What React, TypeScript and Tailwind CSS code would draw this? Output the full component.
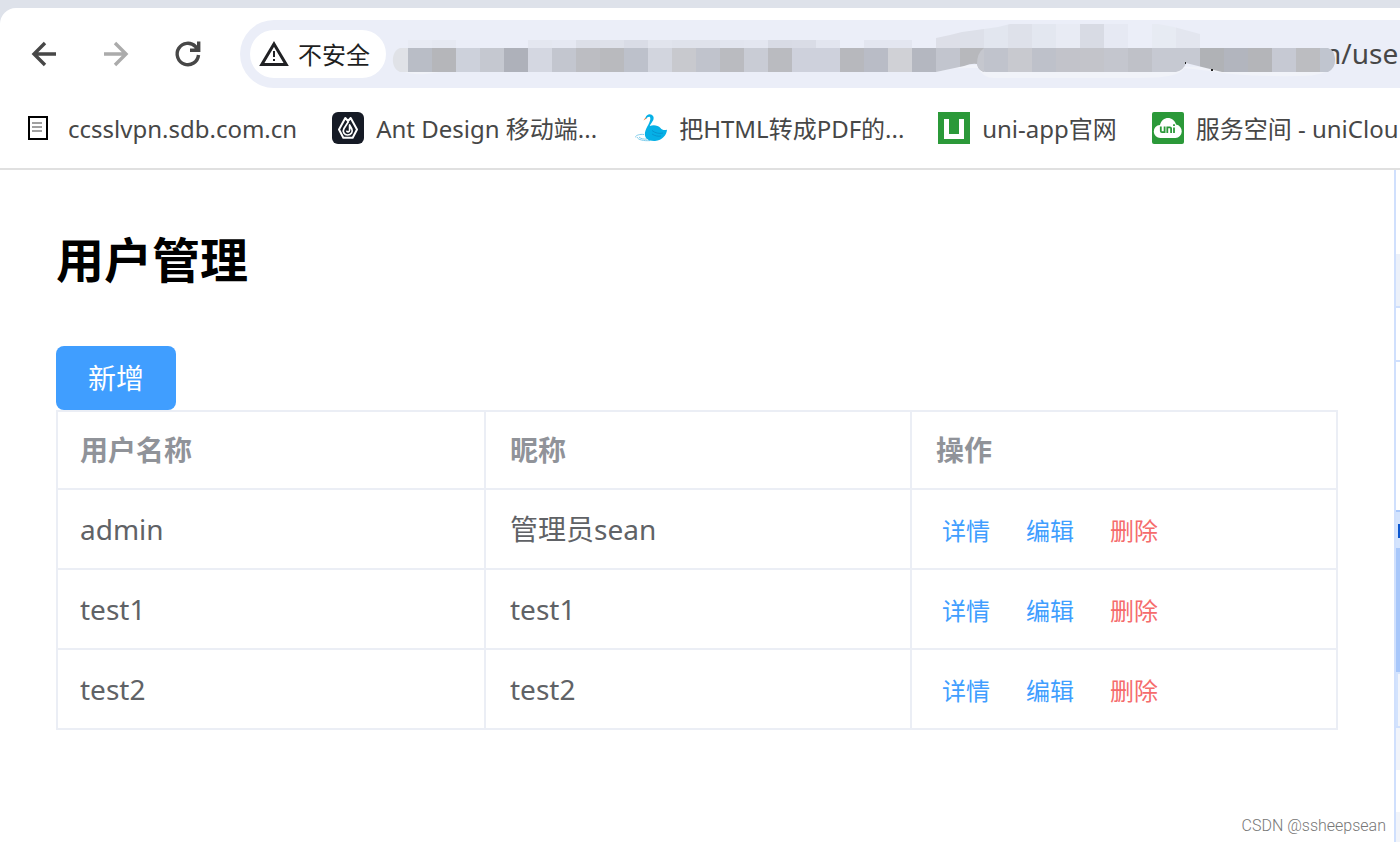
import type { ReactNode } from "react";
import clsx from "clsx";

interface User {
  username: string;
  nickname: string;
}

interface Block {
  x: number;
  color: string;
}

interface Bookmark {
  label: string;
  icon: ReactNode;
  truncated?: boolean;
}

const users: User[] = [
  { username: "admin", nickname: "管理员sean" },
  { username: "test1", nickname: "test1" },
  { username: "test2", nickname: "test2" },
];

const BLOCK = 24;

const toBlocks = (start: number, colors: string[]): Block[] =>
  colors.map((color, i) => ({ x: start + i * BLOCK, color }));

const lowerBlocks = toBlocks(384, [
  "#e0e2e7", "#b9bdc6", "#b5b6ba", "#cdd1db", "#c5c8d0", "#aeb1ba", "#d4d7e1", "#c3c6cf",
  "#bcbdc2", "#b9babe", "#bdc1cb", "#d2d5de", "#c8c9ce", "#c0c3cc", "#babbc0", "#c9ccd5",
  "#babbc0", "#ced1dc", "#ced1dc", "#b7b8bd", "#b9bcc6", "#d0d1d6", "#b4b7c0", "#c2c5ce",
  "#b7b8bc", "#c0c3cc", "#c8c9cf", "#bec1ca", "#c2c3ca", "#c3c4ca", "#c4c6ce", "#bfc1c8",
  "#c6c9d2", "#c6c9d2", "#b0b2b6", "#b2b5be", "#b4b5b9", "#c6c9d3", "#bcbdc1", "#c0c5cf",
]);

const upperBlocks = toBlocks(408, [
  "#e8ebf4", "#e6e9f2", "#eaedf7", "#ebeef8", "#ebeef8", "#e4e7f0", "#e5e8f2", "#dcdfe8",
  "#dee1ea", "#d9dce6", "#e1e4ed", "#dfe2eb", "#dfe2eb", "#e2e5ef", "#e3e6f0", "#d8dbe5",
  "#d9dce6", "#e2e5ef", "#ebeef8", "#e3e6f0", "#e3e6f0", "#ebeef8", "#dddfe8", "#dde0e9",
  "#e2e6ef", "#dee1ea", "#e3e7f0", "#e8ebf4", "#d8dbe4", "#e6e9f3", "#ebeef8", "#e7ebf3",
  "#e3e6ef",
]);

const PixelatedHost = () => (
  <svg viewBox="392 20 944 68" className="relative z-10 h-17 w-[944px] shrink-0" aria-hidden="true">
    <defs>
      <clipPath id="upper">
        <path d="M408 40H936V38L950 35L962 32L984 29L998 27L1010 24H1158L1174 27L1200 34V48H408Z" />
      </clipPath>
      <clipPath id="lower">
        <path d="M400 48C391 51 390 68 400 72H936L964 66Q972 63 977 64Q979 72 986 72H1176Q1184 70 1186 63L1206 68L1222 72H1328Q1336 68 1335 58Q1334 50 1328 48Z" />
      </clipPath>
    </defs>
    <path d="M402 71Q412 75 426 74L440 72H936L968 65H977Q982 78 994 78H1140Q1180 78 1184 68L1210 71Q1240 77 1300 76Q1326 76 1333 66Z" fill="#f1f3f9" />
    <g clipPath="url(#upper)" shapeRendering="crispEdges">
      {upperBlocks.map((b) => (
        <rect key={b.x} x={b.x} y={24} width={BLOCK} height={24} fill={b.color} />
      ))}
    </g>
    <g clipPath="url(#lower)" shapeRendering="crispEdges">
      {lowerBlocks.map((b) => (
        <rect key={b.x} x={b.x} y={48} width={BLOCK} height={24} fill={b.color} />
      ))}
    </g>
    <path d="M977 64Q977 53 984 48V72Q978 70 977 64Z" fill="#c5c7ce" />
    <path d="M1211 69h2v2h-2zM1185 62h1v2h-1z" fill="#222" />
  </svg>
);

const BackIcon = () => (
  <svg viewBox="0 0 36 36" className="size-9" fill="none" stroke="currentColor" strokeWidth="3.4" aria-hidden="true">
    <path d="M30 18H8.5M19 7L8 18l11 11" />
  </svg>
);

const ForwardIcon = () => (
  <svg viewBox="0 0 36 36" className="size-9" fill="none" stroke="currentColor" strokeWidth="3.4" aria-hidden="true">
    <path d="M6 18h21.500M17 7l11 11-11 11" />
  </svg>
);

const ReloadIcon = () => (
  <svg viewBox="0 0 36 36" className="size-9" fill="none" stroke="currentColor" strokeWidth="3.4" aria-hidden="true">
    <path d="M28.500 19A10.700 10.700 0 1 1 25.500 10.500L28 13" />
    <path d="M20 14.300h8.700V5.500" />
    <path d="M23 14l5-5v5z" fill="currentColor" stroke="none" />
  </svg>
);

const WarningIcon = () => (
  <svg viewBox="0 0 30 26" className="h-[26px] w-[30px]" aria-hidden="true">
    <path d="M15 3L27.200 23.500H2.800Z" fill="none" stroke="#202124" strokeWidth="3" />
    <path d="M14 10h2v6h-2zM14 18h2v2h-2z" fill="#202124" />
  </svg>
);

const PageIcon = () => (
  <svg viewBox="0 0 32 32" className="size-8 shrink-0" aria-hidden="true">
    <path d="M5 5h18v22H5z" fill="#fff" stroke="#000" strokeWidth="2" />
    <path d="M8 11h10M8 15h10M8 19h10" stroke="#a0a0a0" strokeWidth="2" />
  </svg>
);

const AntMobileIcon = () => (
  <svg viewBox="0 0 32 32" className="size-8 shrink-0" fill="none" stroke="#fff" strokeLinejoin="round" aria-hidden="true">
    <rect width="32" height="32" rx="6" fill="#161b26" stroke="none" />
    <path d="M13.300 6L7 17.500l4.300 8.200h9.400l4.300-8.200L18.700 6 16 9z" strokeWidth="2" />
    <path d="M16.500 9.500L12 16.500C10 20 12.500 23 15.500 23c3.800 0 5.600-3.200 4.300-6L17.600 13v5c0 2.200-2.600 2.400-3 .6" strokeWidth="1.700" />
  </svg>
);

const SwanIcon = () => (
  <svg viewBox="0 0 32 32" className="size-8 shrink-0" aria-hidden="true">
    <path d="M0 25.500c1-2.500 5-3.500 9-3M2 25c1 3 7 4 13 3.600M4 25c2 2 5 2.300 8 2" fill="none" stroke="#7fcdec" strokeWidth="1" />
    <path d="M10.500 5.500L8.400 8.500 11.500 6.500z" fill="#e8783a" />
    <path d="M10.500 5.800C11.500 1.500 16.500 1 18.200 4.300C20 8 15.800 11 14.800 14C18 12.500 23 13 25.500 16c1.500 2 3.500 2.500 6.500 1.800C31.500 23 27.500 28.500 20 29C13 29.300 9 26 10 20.500C10.700 16 16 9.500 15.300 6C15 3.800 12 5 11.500 6.800z" fill="#06b0e6" />
    <path d="M17 18.500c3 2.500 7 3.500 11 2.500M17 22c3 2 6 2.600 9 2" fill="none" stroke="#0795d0" strokeWidth="1" />
  </svg>
);

const UniAppIcon = () => (
  <svg viewBox="0 0 32 32" className="size-8 shrink-0" aria-hidden="true">
    <path d="M0 0h32v32H0z" fill="#2b9939" />
    <path d="M6 7h5v15h10V7h5v20H6z" fill="#fff" />
  </svg>
);

const UniCloudIcon = () => (
  <svg viewBox="0 0 32 32" className="size-8 shrink-0" aria-hidden="true">
    <rect width="32" height="32" rx="2" fill="#2b9939" />
    <path d="M8.500 26a6.500 6.500 0 0 1-.5-13C9 8.500 12.500 6 16 6S23 8.500 24 12.500A6.800 6.800 0 0 1 23.500 26z" fill="#fff" />
    <g fill="none" stroke="#2b9939" strokeWidth="1.800">
      <path d="M8.800 14.500v4.500q0 1.200 1.200 1.200h2.600v-5.700M15.300 21v-5.600h2.600q1.200 0 1.200 1.200V21M22 15.500V21M22 12.300v1.700" />
    </g>
  </svg>
);

const bookmarks: Bookmark[] = [
  { label: "ccsslvpn.sdb.com.cn", icon: <PageIcon /> },
  { label: "Ant Design 移动端...", icon: <AntMobileIcon />, truncated: true },
  { label: "把HTML转成PDF的...", icon: <SwanIcon />, truncated: true },
  { label: "uni-app官网", icon: <UniAppIcon /> },
  { label: "服务空间 - uniClou", icon: <UniCloudIcon /> },
];

const BrowserBar = () => (
  <header className="overflow-hidden bg-[#dee2ea] pt-2">
    <div className="rounded-tl-2xl border-b-2 border-[#e0e0e0] bg-white pt-3">
      <div className="flex items-center">
        <nav className="flex shrink-0 gap-9 pr-[34px] pl-[26px] text-[#474747]">
          <button type="button" aria-label="后退">
            <BackIcon />
          </button>
          <button type="button" aria-label="前进" className="text-[#ababab]">
            <ForwardIcon />
          </button>
          <button type="button" aria-label="重新加载">
            <ReloadIcon />
          </button>
        </nav>
        <div className="flex h-17 min-w-0 flex-1 items-center overflow-hidden rounded-l-full bg-[#ebeef8] pl-2.5">
          <button
            type="button"
            className="mr-1.5 flex h-12 shrink-0 items-center gap-[9px] rounded-full bg-white pr-4 pl-[9px] text-2xl text-[#1f1f1f]"
          >
            <WarningIcon />
            <span className="pt-0.5">不安全</span>
          </button>
          <PixelatedHost />
          <input
            type="text"
            aria-label="地址"
            defaultValue="n/use"
            className="-ml-3 w-24 shrink-0 bg-transparent pb-0.5 text-[28px] text-[#474747] outline-none"
          />
        </div>
      </div>
      <nav className="flex h-20 items-center gap-[35px] pl-6 text-2xl text-[#474747]">
        {bookmarks.map((item) => (
          <a key={item.label} href="#" className="flex shrink-0 items-center gap-3 whitespace-nowrap">
            {item.icon}
            <span className={clsx("pt-0.5", item.truncated && "w-56")}>{item.label}</span>
          </a>
        ))}
      </nav>
    </div>
  </header>
);

const UserTable = () => (
  <table className="w-full table-fixed border-separate border-spacing-0 border-t-2 border-l-2 border-[#ebeef5] text-left text-[28px] text-[#606266]">
    <colgroup>
      <col className="w-[428px]" />
      <col />
      <col />
    </colgroup>
    <thead>
      <tr className="h-[78px] text-[#909399]">
        {["用户名称", "昵称", "操作"].map((title) => (
          <th key={title} className="border-r-2 border-b-2 border-[#ebeef5] px-6 font-bold first:pl-[22px]">
            {title}
          </th>
        ))}
      </tr>
    </thead>
    <tbody>
      {users.map((user) => (
        <tr key={user.username} className="h-20">
          <td className="border-r-2 border-b-2 border-[#ebeef5] pr-6 pl-[22px]">{user.username}</td>
          <td className="border-r-2 border-b-2 border-[#ebeef5] px-6">{user.nickname}</td>
          <td className="border-r-2 border-b-2 border-[#ebeef5] px-[30px] pt-1">
            <div className="flex gap-9 text-2xl text-[#409eff]">
              <button type="button">详情</button>
              <button type="button">编辑</button>
              <button type="button" className="text-[#f56c6c]">
                删除
              </button>
            </div>
          </td>
        </tr>
      ))}
    </tbody>
  </table>
);

// Left edge of the docked side panel, top to bottom.
const panelStrips = [
  "h-21 bg-white",
  "h-13 bg-[#ecf1fa]",
  "h-0.5 bg-[#d0e0fd]",
  "h-13 bg-white",
  "h-0.5 bg-[#d0e0fd]",
  "h-[148px] bg-white",
  "h-0.5 bg-[#a8c7fa]",
  "h-3 bg-[#d3e3fd]",
  "h-3.5 border-l-2 border-[#d3e3fd] bg-[#0b57d0]",
  "h-2.5 bg-[#d3e3fd]",
  "h-31 bg-[#a8c7fa]",
  "h-0.5 bg-[#d3e3fd]",
  "h-13 border-l-2 border-[#d3e3fd] bg-[#f1f4fb]",
  "h-0.5 bg-[#d0e0fd]",
  "h-[42px] bg-[#f1f4fa]",
  "h-[42px] bg-white",
  "flex-1 bg-[#f1f4fa]",
];

const SidePanel = () => (
  <aside className="flex w-1.5 shrink-0 flex-col border-l-2 border-[#d0e0fd]">
    {panelStrips.map((strip, i) => (
      <div key={i} className={clsx("w-full", strip)} />
    ))}
  </aside>
);

export default function App() {
  return (
    <div className="relative flex min-h-screen flex-col bg-white font-['Noto_Sans','Noto_Sans_CJK_SC',sans-serif]">
      <BrowserBar />
      <div className="flex flex-1">
        <main className="min-w-0 flex-1 px-14 pt-[58px]">
          <h1 className="mb-[54px] text-5xl leading-16 font-bold text-black">用户管理</h1>
          <button
            type="button"
            className="block h-16 rounded-lg bg-[#409eff] px-8 text-[28px] text-white"
          >
            新增
          </button>
          <UserTable />
        </main>
        <SidePanel />
      </div>
      <span className="absolute right-3.5 bottom-1 font-['Roboto',sans-serif] text-base font-light text-[#777]">
        CSDN @ssheepsean
      </span>
    </div>
  );
}
